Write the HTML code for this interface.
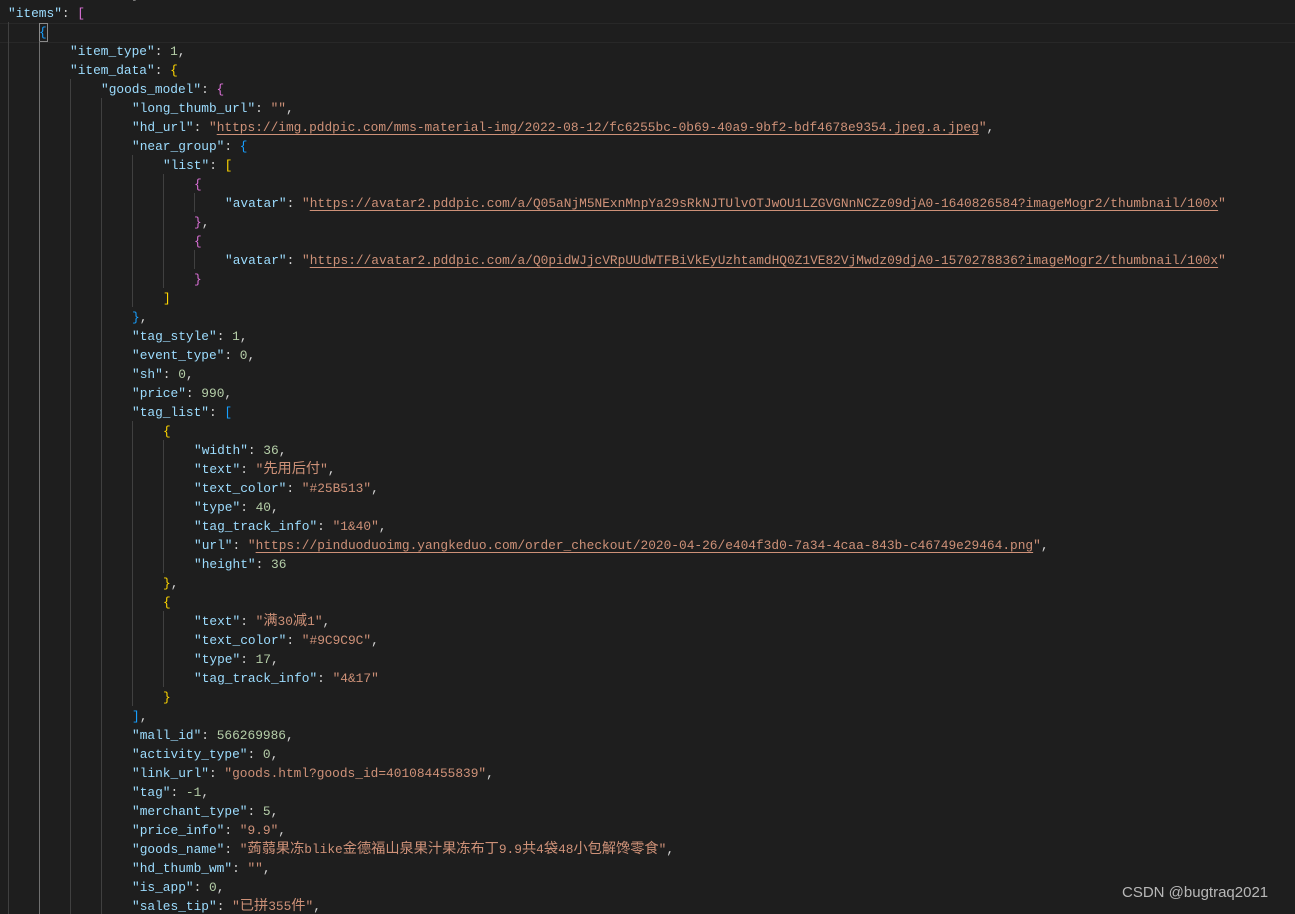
<!DOCTYPE html>
<html><head><meta charset="utf-8">
<style>
html,body{margin:0;padding:0;background:#1e1e1e;width:1295px;height:914px;overflow:hidden;}
#ed{position:relative;width:1295px;height:914px;font-family:"Liberation Mono","Noto Sans CJK SC",monospace;font-size:12.84px;color:#d4d4d4;}
.l{position:absolute;left:0;height:19px;line-height:19px;white-space:pre;}
.k{color:#9cdcfe}.s{color:#ce9178}.n{color:#b5cea8}
.u{color:#ce9178;text-decoration:underline;text-underline-offset:3px}
.b1{color:#ffd700}.b2{color:#da70d6}.b3{color:#179fff}
.g{position:absolute;width:1px;background:#404040}
.cj{font-size:14.2px;letter-spacing:0}
.wm{position:absolute;left:1122px;top:884px;font-family:"Liberation Sans",sans-serif;font-size:15px;color:#b8b8b8}
</style></head><body><div id="ed">
<div style="position:absolute;left:0;top:23px;width:1295px;height:18px;border-top:1px solid #282828;border-bottom:1px solid #282828"></div>
<div style="position:absolute;left:39px;top:23px;width:7px;height:17px;border:1px solid #8a8a8a"></div>

<div class="g" style="left:8px;top:22px;height:900px"></div>
<div class="g" style="left:39px;top:41px;height:880px;background:#707070"></div>
<div class="g" style="left:70px;top:79px;height:840px"></div>
<div class="g" style="left:101px;top:98px;height:820px"></div>
<div class="g" style="left:132px;top:155px;height:152px"></div>
<div class="g" style="left:132px;top:421px;height:285px"></div>
<div class="g" style="left:163px;top:174px;height:114px"></div>
<div class="g" style="left:163px;top:440px;height:133px"></div>
<div class="g" style="left:163px;top:611px;height:76px"></div>
<div class="g" style="left:194px;top:193px;height:19px"></div>
<div class="g" style="left:194px;top:250px;height:19px"></div>

<div class="l" style="top:-15.5px;left:132px">}</div>
<div class="l" style="top:3.5px;left:8px"><span class="k">"items"</span>: <span class="b2">[</span></div>
<div class="l" style="top:22.5px;left:39px"><span class="b3">{</span></div>
<div class="l" style="top:41.5px;left:70px"><span class="k">"item_type"</span>: <span class="n">1</span>,</div>
<div class="l" style="top:60.5px;left:70px"><span class="k">"item_data"</span>: <span class="b1">{</span></div>
<div class="l" style="top:79.5px;left:101px"><span class="k">"goods_model"</span>: <span class="b2">{</span></div>
<div class="l" style="top:98.5px;left:132px"><span class="k">"long_thumb_url"</span>: <span class="s">""</span>,</div>
<div class="l" style="top:117.5px;left:132px"><span class="k">"hd_url"</span>: <span class="s">"</span><span class="u">https://img.pddpic.com/mms-material-img/2022-08-12/fc6255bc-0b69-40a9-9bf2-bdf4678e9354.jpeg.a.jpeg</span><span class="s">"</span>,</div>
<div class="l" style="top:136.5px;left:132px"><span class="k">"near_group"</span>: <span class="b3">{</span></div>
<div class="l" style="top:155.5px;left:163px"><span class="k">"list"</span>: <span class="b1">[</span></div>
<div class="l" style="top:174.5px;left:194px"><span class="b2">{</span></div>
<div class="l" style="top:193.5px;left:225px"><span class="k">"avatar"</span>: <span class="s">"</span><span class="u">https://avatar2.pddpic.com/a/Q05aNjM5NExnMnpYa29sRkNJTUlvOTJwOU1LZGVGNnNCZz09djA0-1640826584?imageMogr2/thumbnail/100x</span><span class="s">"</span></div>
<div class="l" style="top:212.5px;left:194px"><span class="b2">}</span>,</div>
<div class="l" style="top:231.5px;left:194px"><span class="b2">{</span></div>
<div class="l" style="top:250.5px;left:225px"><span class="k">"avatar"</span>: <span class="s">"</span><span class="u">https://avatar2.pddpic.com/a/Q0pidWJjcVRpUUdWTFBiVkEyUzhtamdHQ0Z1VE82VjMwdz09djA0-1570278836?imageMogr2/thumbnail/100x</span><span class="s">"</span></div>
<div class="l" style="top:269.5px;left:194px"><span class="b2">}</span></div>
<div class="l" style="top:288.5px;left:163px"><span class="b1">]</span></div>
<div class="l" style="top:307.5px;left:132px"><span class="b3">}</span>,</div>
<div class="l" style="top:326.5px;left:132px"><span class="k">"tag_style"</span>: <span class="n">1</span>,</div>
<div class="l" style="top:345.5px;left:132px"><span class="k">"event_type"</span>: <span class="n">0</span>,</div>
<div class="l" style="top:364.5px;left:132px"><span class="k">"sh"</span>: <span class="n">0</span>,</div>
<div class="l" style="top:383.5px;left:132px"><span class="k">"price"</span>: <span class="n">990</span>,</div>
<div class="l" style="top:402.5px;left:132px"><span class="k">"tag_list"</span>: <span class="b3">[</span></div>
<div class="l" style="top:421.5px;left:163px"><span class="b1">{</span></div>
<div class="l" style="top:440.5px;left:194px"><span class="k">"width"</span>: <span class="n">36</span>,</div>
<div class="l" style="top:459.5px;left:194px"><span class="k">"text"</span>: <span class="s">"<span class="cj">先用后付</span>"</span>,</div>
<div class="l" style="top:478.5px;left:194px"><span class="k">"text_color"</span>: <span class="s">"#25B513"</span>,</div>
<div class="l" style="top:497.5px;left:194px"><span class="k">"type"</span>: <span class="n">40</span>,</div>
<div class="l" style="top:516.5px;left:194px"><span class="k">"tag_track_info"</span>: <span class="s">"1&amp;40"</span>,</div>
<div class="l" style="top:535.5px;left:194px"><span class="k">"url"</span>: <span class="s">"</span><span class="u">https://pinduoduoimg.yangkeduo.com/order_checkout/2020-04-26/e404f3d0-7a34-4caa-843b-c46749e29464.png</span><span class="s">"</span>,</div>
<div class="l" style="top:554.5px;left:194px"><span class="k">"height"</span>: <span class="n">36</span></div>
<div class="l" style="top:573.5px;left:163px"><span class="b1">}</span>,</div>
<div class="l" style="top:592.5px;left:163px"><span class="b1">{</span></div>
<div class="l" style="top:611.5px;left:194px"><span class="k">"text"</span>: <span class="s">"<span class="cj">满</span>30<span class="cj">减</span>1"</span>,</div>
<div class="l" style="top:630.5px;left:194px"><span class="k">"text_color"</span>: <span class="s">"#9C9C9C"</span>,</div>
<div class="l" style="top:649.5px;left:194px"><span class="k">"type"</span>: <span class="n">17</span>,</div>
<div class="l" style="top:668.5px;left:194px"><span class="k">"tag_track_info"</span>: <span class="s">"4&amp;17"</span></div>
<div class="l" style="top:687.5px;left:163px"><span class="b1">}</span></div>
<div class="l" style="top:706.5px;left:132px"><span class="b3">]</span>,</div>
<div class="l" style="top:725.5px;left:132px"><span class="k">"mall_id"</span>: <span class="n">566269986</span>,</div>
<div class="l" style="top:744.5px;left:132px"><span class="k">"activity_type"</span>: <span class="n">0</span>,</div>
<div class="l" style="top:763.5px;left:132px"><span class="k">"link_url"</span>: <span class="s">"goods.html?goods_id=401084455839"</span>,</div>
<div class="l" style="top:782.5px;left:132px"><span class="k">"tag"</span>: <span class="n">-1</span>,</div>
<div class="l" style="top:801.5px;left:132px"><span class="k">"merchant_type"</span>: <span class="n">5</span>,</div>
<div class="l" style="top:820.5px;left:132px"><span class="k">"price_info"</span>: <span class="s">"9.9"</span>,</div>
<div class="l" style="top:839.5px;left:132px"><span class="k">"goods_name"</span>: <span class="s">"<span class="cj">蒟蒻果冻</span>blike<span class="cj">金德福山泉果汁果冻布丁</span>9.9<span class="cj">共</span>4<span class="cj">袋</span>48<span class="cj">小包解馋零食</span>"</span>,</div>
<div class="l" style="top:858.5px;left:132px"><span class="k">"hd_thumb_wm"</span>: <span class="s">""</span>,</div>
<div class="l" style="top:877.5px;left:132px"><span class="k">"is_app"</span>: <span class="n">0</span>,</div>
<div class="l" style="top:896.5px;left:132px"><span class="k">"sales_tip"</span>: <span class="s">"<span class="cj">已拼</span>355<span class="cj">件</span>"</span>,</div>

<div class="wm">CSDN @bugtraq2021</div>
</div></body></html>
